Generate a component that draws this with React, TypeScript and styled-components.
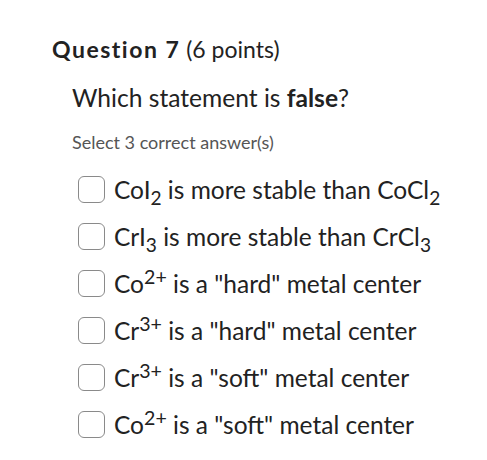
import React from "react";
import styled, { createGlobalStyle } from "styled-components";

const Global = createGlobalStyle`
  html, body { margin: 0; padding: 0; background: #fff; }
  body { font-family: Lato, "Noto Sans", sans-serif; color: #222; }
`;

const Page = styled.div`
  padding: 34px 0 0 52px;
  width: 487px;
  height: 460px;
  box-sizing: border-box;
  overflow: hidden;
`;

const Title = styled.h2`
  margin: 0;
  font-size: 23px;
  font-weight: 400;
  line-height: 30px;
  color: #222;
  b { font-weight: 700; letter-spacing: 1.5px; }
`;

const Body = styled.div`
  padding-left: 20px;
  margin-top: 18px;
`;

const Prompt = styled.div`
  font-size: 24.6px;
  line-height: 32px;
  color: #222;
  b { font-weight: 700; }
`;

const Hint = styled.div`
  margin-top: 16px;
  font-size: 18px;
  line-height: 24px;
  color: #555;
`;

const Options = styled.div`
  margin-top: 19px;
  display: flex;
  flex-direction: column;
  gap: 15px;
`;

const Option = styled.label`
  display: flex;
  align-items: center;
  gap: 9px;
  height: 32px;
  padding-left: 6px;
  font-size: 24.5px;
  color: #222;
`;

const Box = styled.span`
  width: 27px;
  height: 27px;
  box-sizing: border-box;
  border: 1.5px solid #8a8a8a;
  border-radius: 6px;
  background: #fff;
  flex-shrink: 0;
`;

const Sub = styled.sub`
  font-size: 0.78em;
  line-height: 0;
  vertical-align: -0.3em;
`;

const Sup = styled.sup`
  font-size: 0.8em;
  line-height: 0;
  vertical-align: 0.45em;
`;

export default function App() {
  return (
    <>
      <Global />
      <Page>
        <Title>
          <b>Question 7</b> (6 points)
        </Title>
        <Body>
          <Prompt>
            Which statement is <b>false</b>?
          </Prompt>
          <Hint>Select 3 correct answer(s)</Hint>
          <Options>
            <Option>
              <Box />
              <span>
                CoI<Sub>2</Sub> is more stable than CoCl<Sub>2</Sub>
              </span>
            </Option>
            <Option>
              <Box />
              <span>
                CrI<Sub>3</Sub> is more stable than CrCl<Sub>3</Sub>
              </span>
            </Option>
            <Option>
              <Box />
              <span>
                Co<Sup>2+</Sup> is a "hard" metal center
              </span>
            </Option>
            <Option>
              <Box />
              <span>
                Cr<Sup>3+</Sup> is a "hard" metal center
              </span>
            </Option>
            <Option>
              <Box />
              <span>
                Cr<Sup>3+</Sup> is a "soft" metal center
              </span>
            </Option>
            <Option>
              <Box />
              <span>
                Co<Sup>2+</Sup> is a "soft" metal center
              </span>
            </Option>
          </Options>
        </Body>
      </Page>
    </>
  );
}
